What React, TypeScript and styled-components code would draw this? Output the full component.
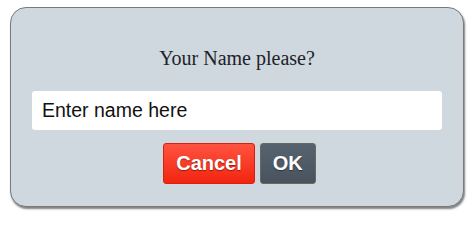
import * as React from 'react'
import styled, { createGlobalStyle } from 'styled-components'

const GlobalStyle = createGlobalStyle`
  html, body {
    margin: 0;
    padding: 0;
    background: #ffffff;
  }
`

const Page = styled.div`
  padding: 7px 10px;
`

const Dialog = styled.form`
  box-sizing: border-box;
  width: 454px;
  height: 200px;
  display: flex;
  flex-direction: column;
  align-items: center;
  padding: 39px 21px 0;
  background: #cfd8de;
  border: 1px solid #7a7a7a;
  border-radius: 16px;
  box-shadow: 1px 2px 2px rgba(0, 0, 0, 0.5);
`

const Prompt = styled.h2`
  margin: 0;
  font-family: 'Liberation Serif', 'Times New Roman', serif;
  font-weight: normal;
  font-size: 20px;
  line-height: 23px;
  color: #1e2228;
`

const NameInput = styled.input`
  box-sizing: border-box;
  width: 100%;
  height: 39px;
  margin-top: 21px;
  padding: 0 10px;
  border: none;
  border-radius: 3px;
  background: #ffffff;
  font-family: 'Liberation Sans', Arial, sans-serif;
  font-size: 19.5px;
  color: #111111;
  outline: none;

  &::placeholder {
    color: #111111;
    opacity: 1;
  }
`

const Actions = styled.div`
  display: flex;
  gap: 5px;
  margin-top: 13px;
  padding-left: 5px;
`

const Button = styled.button<{ $variant: 'danger' | 'dark' }>`
  box-sizing: border-box;
  height: 41px;
  padding: 0 12px;
  border-radius: 3px;
  font-family: 'Liberation Sans', Arial, sans-serif;
  font-weight: bold;
  font-size: 20px;
  color: #ffffff;
  text-shadow: 0 1px 1px rgba(0, 0, 0, 0.45);
  cursor: pointer;
  border: 1px solid
    ${(p) => (p.$variant === 'danger' ? '#d8200f' : '#5f6e5a')};
  background: ${(p) =>
    p.$variant === 'danger'
      ? 'linear-gradient(#ff5340, #f2250f)'
      : 'linear-gradient(#56636f, #48535e)'};
`

const App: React.FC = () => {
  return (
    <Page>
      <GlobalStyle />
      <Dialog onSubmit={(e) => e.preventDefault()}>
        <Prompt>Your Name please?</Prompt>
        <NameInput placeholder="Enter name here" />
        <Actions>
          <Button type="button" $variant="danger">
            Cancel
          </Button>
          <Button type="submit" $variant="dark">
            OK
          </Button>
        </Actions>
      </Dialog>
    </Page>
  )
}

export default App
